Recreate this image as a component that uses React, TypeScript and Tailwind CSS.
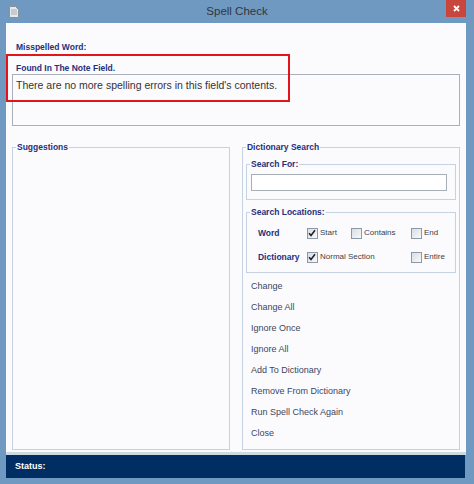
import React from 'react';

const LABEL = "text-[8.5px] font-bold leading-[12px] text-[#26307c]";

function Check({ checked = false }: { checked?: boolean }) {
  return (
    <span className="w-[11px] h-[11px] border border-[#8d98a7] bg-gradient-to-br from-[#d9dee4] to-[#f8f9fb] flex items-center justify-center shrink-0">
      {checked && (
        <svg width="8" height="8" viewBox="0 0 8 8">
          <path d="M1 4.2 L3 6.4 L7 1.2" fill="none" stroke="#1f2430" strokeWidth="1.6" />
        </svg>
      )}
    </span>
  );
}

function Option({ label, checked }: { label: string; checked?: boolean }) {
  return (
    <div className="flex items-center gap-[2px]">
      <Check checked={checked} />
      <span className="text-[8px] leading-[12px] text-[#3a3f4a]">{label}</span>
    </div>
  );
}

const actions = [
  'Change',
  'Change All',
  'Ignore Once',
  'Ignore All',
  'Add To Dictionary',
  'Remove From Dictionary',
  'Run Spell Check Again',
  'Close',
];

export default function App() {
  return (
    <div className="w-[474px] h-[484px] bg-[#7099c1] flex flex-col font-['Liberation_Sans',Arial,sans-serif]">
      {/* title bar */}
      <div className="h-[23px] grid grid-cols-[1fr_auto_1fr]">
        <div className="flex items-center pl-[9px]">
          <svg width="10" height="12" viewBox="0 0 10 12">
            <path d="M0.5 0.5 H6.5 L9.5 3.5 V11.5 H0.5 Z" fill="#e6e8ea" stroke="#8a9096" />
            <path d="M2 4 H8 M2 6 H8 M2 8 H8" stroke="#9aa0a6" strokeWidth="0.8" />
          </svg>
        </div>
        <div className="flex items-center text-[11.5px] text-[#2f3640]">Spell Check</div>
        <div className="flex justify-end items-start pr-[8px]">
          <div className="w-[20px] h-[17px] bg-[#c8463d] flex items-center justify-center">
            <svg width="7" height="7" viewBox="0 0 7 7">
              <path d="M1 1 L6 6 M6 1 L1 6" stroke="#ffffff" strokeWidth="1.8" />
            </svg>
          </div>
        </div>
      </div>

      {/* content */}
      <div className="relative ml-[6px] w-[460px] h-[429px] bg-[#fbfbfe] px-[6px] pt-[18px]">
        <div className={`${LABEL} pl-[4px]`}>Misspelled Word:</div>
        <div className={`${LABEL} pl-[4px] mt-[9px]`}>Found In The Note Field.</div>
        <div className="w-[448px] h-[52px] border border-[#a9b0b9] px-[3px] pt-[4px] text-[10.5px] leading-[12px] text-[#333333]">
          There are no more spelling errors in this field's contents.
        </div>

        {/* red highlight */}
        <div className="absolute left-0 top-[31px] w-[284px] h-[48px] border-2 border-[#e3141c]" />

        <div className="mt-[15px] flex gap-[12px] h-[309px]">
          <fieldset className="w-[219px] h-full border border-[#c6d2df]">
            <legend className={`${LABEL} ml-[3px] px-[1px]`}>Suggestions</legend>
          </fieldset>

          <fieldset className="w-[219px] h-full border border-[#c6d2df] px-[3px]">
            <legend className={`${LABEL} px-[1px]`}>Dictionary Search</legend>

            <fieldset className="mt-[5px] border border-[#c6d2df] pb-[8px]">
              <legend className={`${LABEL} ml-[3px] px-[1px]`}>Search For:</legend>
              <div className="mt-[4px] ml-[4px] w-[196px] h-[17px] border border-[#a7aeb8] bg-white" />
            </fieldset>

            <fieldset className="mt-[6px] border border-[#c6d2df] pb-[9px]">
              <legend className={`${LABEL} ml-[3px] px-[1px]`}>Search Locations:</legend>
              <div className="mt-[9px] pl-[11px] grid grid-cols-[49px_44px_60px_1fr] gap-y-[12px] items-center">
                <div className={LABEL}>Word</div>
                <Option label="Start" checked />
                <Option label="Contains" />
                <Option label="End" />
                <div className={LABEL}>Dictionary</div>
                <div className="col-span-2">
                  <Option label="Normal Section" checked />
                </div>
                <Option label="Entire" />
              </div>
            </fieldset>

            <div className="mt-[3px] pl-[5px] flex flex-col">
              {actions.map((a) => (
                <div key={a} className="h-[21px] flex items-center text-[9px] text-[#3b4660]">
                  {a}
                </div>
              ))}
            </div>
          </fieldset>
        </div>
      </div>

      <div className="ml-[6px] w-[460px] h-[3px] bg-[#cfd9e4]" />
      <div className="ml-[6px] w-[459px] h-[23px] bg-[#002e62] flex items-center pl-[9px] text-[9px] font-bold text-white">
        Status:
      </div>
    </div>
  );
}
